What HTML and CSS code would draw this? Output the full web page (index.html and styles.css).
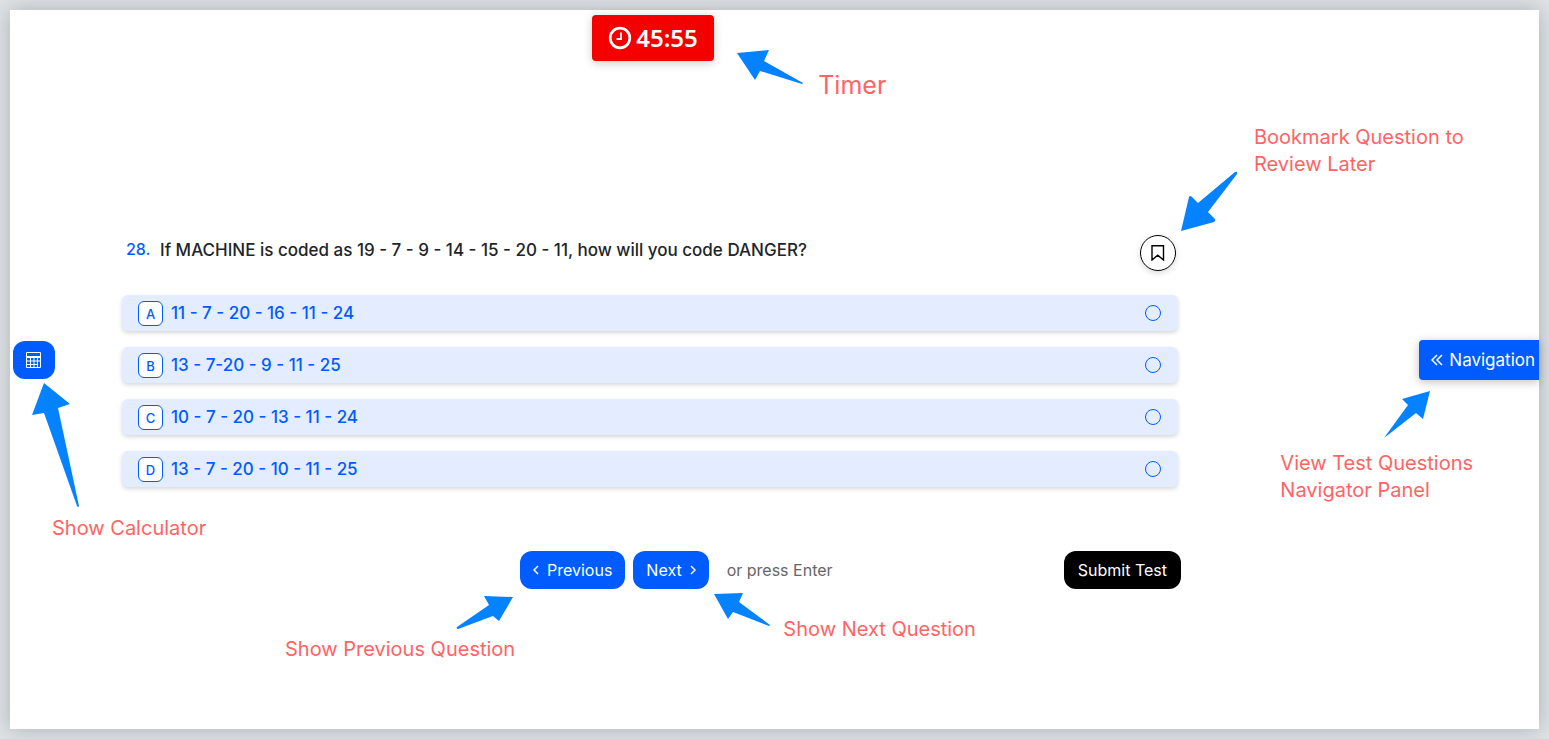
FILE: index.html
```html
<!DOCTYPE html>
<html lang="en">
<head>
<meta charset="utf-8">
<meta name="viewport" content="width=device-width, initial-scale=1">
<title>Test</title>
<link rel="stylesheet" href="styles.css">
</head>
<body>
<div class="stage">
  <aside class="side side-left">
    <div class="anchor">
      <button class="btn calc" type="button" aria-label="Show calculator">
        <svg width="16" height="16" viewBox="0 0 16 16" fill="none" stroke="currentColor"><path d="M.5.5h14v15H.5zM.5 4.500h14M.5 5.500h14M4.500 5.500v10M8 5.500v10M11.500 5.500v10M.5 9h14M.5 12.500h11"/></svg>
      </button>
      <svg class="arrow arrow-calc" width="40" height="126" viewBox="0 0 40 126"><path d="M13 1 39 22 27 26 48 124Q47 126 46 124L13 31 1 33Z"/></svg>
      <p class="note note-calc">Show Calculator</p>
    </div>
  </aside>

  <main class="main">
    <div class="timer-row">
      <div class="anchor">
        <div class="timer" role="timer">
          <svg width="24" height="24" viewBox="0 0 24 24" fill="none" stroke="currentColor"><circle cx="12" cy="12" r="9.800" stroke-width="2.700"/><path d="M13 6.500v6.500H8.500" stroke-width="1.800"/></svg>
          <span>45:55</span>
        </div>
        <svg class="arrow arrow-timer" width="68" height="36" viewBox="0 0 68 36"><path d="M1 4 33 1 28 12 67 34 66 35 24 22 19 31Z"/></svg>
        <p class="note note-timer">Timer</p>
      </div>
    </div>

    <form class="quiz">
      <div class="question">
        <span class="number">28.</span>
        <h1 class="prompt">If MACHINE is coded as 19 - 7 - 9 - 14 - 15 - 20 - 11, how will you code DANGER?</h1>
        <div class="anchor">
          <button class="bookmark" type="button" aria-label="Bookmark question">
            <svg width="16" height="16" viewBox="0 0 16 16" fill="none" stroke="currentColor" stroke-width="1.400"><path d="M2 .7h11.500v14.300L7.750 10.200 2 15Z"/></svg>
          </button>
          <svg class="arrow arrow-bookmark" width="58" height="61" viewBox="0 0 58 61"><path d="M1 60 9 26Q10 24 12 26L18 32 55 1Q58 0 57 3L28 41 35 48Q36 50 34 51Z"/></svg>
          <p class="note note-bookmark">Bookmark Question to<br>Review Later</p>
        </div>
      </div>

      <div class="options">
        <label class="option"><span class="key">A</span><span class="answer">11 - 7 - 20 - 16 - 11 - 24</span><input class="radio" type="radio" name="answer"></label>
        <label class="option"><span class="key">B</span><span class="answer">13 - 7-20 - 9 - 11 - 25</span><input class="radio" type="radio" name="answer"></label>
        <label class="option"><span class="key">C</span><span class="answer">10 - 7 - 20 - 13 - 11 - 24</span><input class="radio" type="radio" name="answer"></label>
        <label class="option"><span class="key">D</span><span class="answer">13 - 7 - 20 - 10 - 11 - 25</span><input class="radio" type="radio" name="answer"></label>
      </div>

      <div class="actions">
        <div class="anchor">
          <button class="btn previous" type="button"><svg width="6" height="10" viewBox="0 0 6 10" fill="none" stroke="currentColor" stroke-width="1.500"><path d="M5 1 1 5l4 4"/></svg>Previous</button>
          <svg class="arrow arrow-previous" width="58" height="34" viewBox="0 0 58 34"><path d="M57 1 28 0 33 9 1 31Q0 33 2 33L37 20 43 25Z"/></svg>
          <p class="note note-previous">Show Previous Question</p>
        </div>
        <div class="anchor">
          <button class="btn next" type="button">Next<svg width="6" height="10" viewBox="0 0 6 10" fill="none" stroke="currentColor" stroke-width="1.500"><path d="m1 1 4 4-4 4"/></svg></button>
          <svg class="arrow arrow-next" width="58" height="35" viewBox="0 0 58 35"><path d="M1 2 30 1 26 10 57 33 56 34 20 20 15 27Z"/></svg>
          <p class="note note-next">Show Next Question</p>
        </div>
        <span class="hint">or press Enter</span>
        <button class="btn submit" type="submit">Submit Test</button>
      </div>
    </form>
  </main>

  <aside class="side side-right">
    <div class="anchor">
      <button class="navigation" type="button"><svg width="12" height="12" viewBox="0 0 12 12" fill="none" stroke="currentColor" stroke-width="1.500"><path d="M6 1 1 6l5 5M11 1 6 6l5 5"/></svg>Navigation</button>
      <svg class="arrow arrow-navigation" width="48" height="49" viewBox="0 0 48 49"><path d="M47 1 19 9 25 15 1 48 33 23 40 29Z"/></svg>
      <p class="note note-navigation">View Test Questions<br>Navigator Panel</p>
    </div>
  </aside>
</div>
</body>
</html>
```
FILE: styles.css
```css
* { box-sizing: border-box; }
body {
  margin: 0;
  padding: 10px;
  min-height: 100vh;
  display: grid;
  background: #dfe3e6;
  color: #212529;
  font: 16px/24px Inter, "Noto Sans", sans-serif;
}
button { font: inherit; cursor: pointer; }
svg { display: block; flex: none; }
.stage {
  display: grid;
  grid-template-columns: 112px 1fr 355px;
  background: #fff;
  box-shadow: 0 0 20px rgba(0, 15, 25, .24);
}
.anchor { position: relative; }
.side { display: flex; align-items: center; padding-bottom: 20px; }
.side-left { padding-left: 3px; }
.side-right { justify-content: flex-end; }

.btn {
  display: flex;
  align-items: center;
  justify-content: center;
  gap: 8px;
  height: 38px;
  padding: 0 13px;
  border: 0;
  border-radius: 12px;
  background: #005cff;
  color: #fff;
}
.calc { width: 42px; padding: 0; }
.submit { margin-left: auto; padding: 0 14px; background: #000; }
.navigation {
  display: flex;
  align-items: center;
  gap: 6px;
  height: 40px;
  padding: 0 4px 0 12px;
  border: 0;
  border-radius: 4px 0 0 4px;
  background: #005cff;
  color: #fff;
  font-size: 17px;
  box-shadow: 0 2px 10px rgba(0, 0, 0, .25);
}

.main { padding-top: 5px; }
.timer-row { display: flex; justify-content: center; }
.timer {
  display: flex;
  align-items: center;
  gap: 4px;
  height: 46px;
  padding: 0 16px;
  border-radius: 4px;
  background: #f50000;
  color: #fff;
  font-family: "Noto Sans", sans-serif;
  font-size: 24px;
  font-weight: 600;
  box-shadow: 0 2px 10px rgba(0, 0, 0, .2);
}
.quiz { padding-top: 174px; }
.question { display: flex; align-items: flex-start; padding: 0 8px 0 4px; }
.number { width: 34px; padding-top: 2px; color: #005cff; font-weight: 500; }
.prompt { flex: 1; margin: 0; padding-top: 3px; font-size: 17px; line-height: 24px; font-weight: 500; }
.bookmark {
  display: grid;
  place-items: center;
  width: 36px;
  height: 36px;
  padding: 0;
  border: 1px solid #000;
  border-radius: 50%;
  background: #fff;
  color: #000;
  box-shadow: 0 2px 6px rgba(0, 0, 0, .15);
}
.options { display: grid; gap: 16px; margin: 24px 6px 0 0; }
.option {
  display: flex;
  align-items: center;
  gap: 8px;
  height: 36px;
  padding: 0 17px 0 16px;
  border-radius: 6px;
  background: #e3edff;
  color: #005cff;
  font-size: 17px;
  font-weight: 500;
  box-shadow: 0 2px 4px rgba(0, 0, 0, .16);
}
.key {
  display: grid;
  place-items: center;
  width: 25px;
  height: 25px;
  border: 1px solid #005cff;
  border-radius: 6px;
  background: #fff;
  font-size: 13px;
}
.radio {
  appearance: none;
  width: 16px;
  height: 16px;
  margin: 0 0 0 auto;
  border: 1px solid #005cff;
  border-radius: 50%;
}
.radio:checked { background: #005cff; }
.actions { display: flex; align-items: center; gap: 8px; padding: 64px 3px 0 398px; }
.hint { padding-left: 10px; color: #666; white-space: nowrap; }

.arrow { position: absolute; fill: #0582ff; overflow: visible; pointer-events: none; }
.note {
  position: absolute;
  margin: 0;
  color: #ff6464;
  font: 20px/27px Inter, sans-serif;
  white-space: nowrap;
}
.arrow-calc { left: 18px; top: 41px; }
.note-calc { left: 39px; top: 174px; }
.arrow-timer { left: 144px; top: 34px; }
.note-timer { left: 226px; top: 57px; font-size: 25px; }
.arrow-bookmark { left: 40px; bottom: 39px; }
.note-bookmark { left: 114px; bottom: 93px; }
.arrow-previous { right: 111px; top: 45px; }
.note-previous { left: -235px; top: 85px; }
.arrow-next { left: 80px; top: 41px; }
.note-next { left: 150px; top: 65px; }
.arrow-navigation { right: 108px; top: 50px; }
.note-navigation { left: -139px; top: 110px; }
```
